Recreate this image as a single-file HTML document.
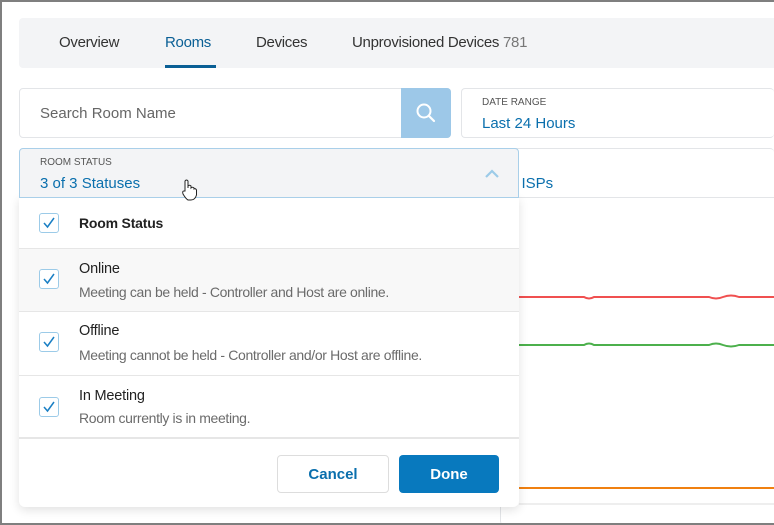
<!DOCTYPE html>
<html><head><style>
*{box-sizing:border-box;margin:0;padding:0}
html,body{width:774px;height:525px;overflow:hidden}
body{background:#fff;font-family:"Liberation Sans",sans-serif;position:relative}
.frame{position:absolute;left:0;top:0;width:774px;height:525px;border:2px solid #7f7f7f;border-right:none}
.abs{position:absolute}
.tabs{left:19px;top:18px;width:760px;height:50px;background:#f3f4f6;border-radius:4px}
.tab{position:absolute;top:16px;font-size:15px;color:#333;letter-spacing:-0.3px}
.box{background:#fff;border:1px solid #e3e5e8;border-radius:4px}
.lbl{font-size:10px;color:#555;letter-spacing:0}
.blue{color:#0a6fad}
.row{position:absolute;left:19px;width:500px;border-bottom:1px solid #e6e6e6}
.cb{position:absolute;left:20px;width:20px;height:20px;border:1px solid #9ccbe8;border-radius:3px;background:#fff}
.t1{position:absolute;left:60px;font-size:14.5px;color:#222;letter-spacing:-0.2px}
.t2{position:absolute;left:60px;font-size:14px;color:#6b6b6b;letter-spacing:-0.35px}
</style></head><body>
<div class="abs tabs">
<div class="tab" style="left:40px">Overview</div>
<div class="tab blue" style="left:146px;color:#0a5f95">Rooms</div>
<div class="abs" style="left:146px;top:47px;width:51px;height:3px;background:#0a5f95"></div>
<div class="tab" style="left:237px">Devices</div>
<div class="tab" style="left:333px">Unprovisioned Devices <span style="color:#777">781</span></div>
</div>
<div class="abs box" style="left:19px;top:88px;width:432px;height:50px"></div>
<div class="abs" style="left:40px;top:105px;font-size:15px;color:#666">Search Room Name</div>
<div class="abs" style="left:401px;top:88px;width:50px;height:50px;background:#9dc8e8;border-radius:0 4px 4px 0">
<svg width="50" height="50"><circle cx="23" cy="23" r="6.5" fill="none" stroke="#fff" stroke-width="2"/><line x1="28" y1="28" x2="33" y2="33" stroke="#fff" stroke-width="2.2" stroke-linecap="round"/></svg></div>
<div class="abs box" style="left:461px;top:88px;width:313px;height:50px;border-right:none"></div>
<div class="abs lbl" style="left:482px;top:97px">DATE RANGE</div>
<div class="abs blue" style="left:482px;top:115px;font-size:15px">Last 24 Hours</div>
<div class="abs box" style="left:500px;top:148px;width:274px;height:377px;border-right:none;border-bottom:none"></div>
<div class="abs" style="left:519px;top:197px;width:255px;height:1px;background:#e3e5e8"></div>
<div class="abs blue" style="left:509px;top:175px;font-size:15px">3 ISPs</div>
<svg class="abs" style="left:519px;top:280px" width="255" height="230">
<path d="M0 17 H65 Q70 20 75 17 H190 Q197 20 204 17 Q212 14 220 17 H260" stroke="#f05050" stroke-width="2" fill="none"/>
<path d="M0 65 H65 Q70 62 75 65 H190 Q197 62 204 65 Q212 68 220 65 H260" stroke="#4cb04c" stroke-width="2" fill="none"/>
<line x1="0" y1="208" x2="260" y2="208" stroke="#f08010" stroke-width="2"/>
<line x1="0" y1="224" x2="260" y2="224" stroke="#ddd" stroke-width="1"/>
</svg>
<div class="abs" style="left:19px;top:197px;width:500px;height:310px;background:#fff;border-radius:0 0 6px 6px;box-shadow:0 3px 10px rgba(0,0,0,.12)"></div>
<div class="abs" style="left:19px;top:148px;width:500px;height:50px;background:#f3f4f6;border:1px solid #a9cfe9;border-radius:4px 4px 0 0"></div>
<div class="abs lbl" style="left:40px;top:157px">ROOM STATUS</div>
<div class="abs blue" style="left:40px;top:175px;font-size:15px">3 of 3 Statuses</div>
<svg class="abs" style="left:484px;top:168px" width="16" height="12"><path d="M2 9 L8 3 L14 9" stroke="#9ccbe8" stroke-width="2.2" fill="none"/></svg>
<svg class="abs" style="left:180px;top:178px" width="18" height="24"><path d="M5 13 V3 Q6.5 1 8 3 V10 V8 Q9.5 6.5 11 8 V10 Q12.5 8.5 14 10 V11 Q15.5 10 16.5 12 V17 Q15 22 11 22 H8 Q6 21 3 16 Q2 13 4 13 Z" fill="#fff" stroke="#222" stroke-width="1"/></svg>
<div class="row" style="top:197px;height:52px">
<div class="cb" style="top:16px"><svg width="18" height="18"><path d="M4 9 L7.5 13 L14 4" stroke="#1a7fc4" stroke-width="1.5" fill="none"/></svg></div>
<div class="t1" style="top:18px;font-weight:bold;font-size:14px">Room Status</div></div>
<div class="row" style="top:249px;height:63px;background:#f8f8f8">
<div class="cb" style="top:20px"><svg width="18" height="18"><path d="M4 9 L7.5 13 L14 4" stroke="#1a7fc4" stroke-width="1.5" fill="none"/></svg></div>
<div class="t1" style="top:12px">Online</div>
<div class="t2" style="top:35px">Meeting can be held - Controller and Host are online.</div></div>
<div class="row" style="top:312px;height:64px">
<div class="cb" style="top:20px"><svg width="18" height="18"><path d="M4 9 L7.5 13 L14 4" stroke="#1a7fc4" stroke-width="1.5" fill="none"/></svg></div>
<div class="t1" style="top:11px">Offline</div>
<div class="t2" style="top:35px">Meeting cannot be held - Controller and/or Host are offline.</div></div>
<div class="row" style="top:376px;height:63px;border-bottom:2px solid #e6e6e6">
<div class="cb" style="top:21px"><svg width="18" height="18"><path d="M4 9 L7.5 13 L14 4" stroke="#1a7fc4" stroke-width="1.5" fill="none"/></svg></div>
<div class="t1" style="top:12px">In Meeting</div>
<div class="t2" style="top:34px">Room currently is in meeting.</div></div>
<div class="abs" style="left:277px;top:455px;width:112px;height:38px;border:1px solid #ddd;border-radius:4px;background:#fff;color:#0a6fad;font-weight:bold;font-size:15px;text-align:center;line-height:38px">Cancel</div>
<div class="abs" style="left:399px;top:455px;width:100px;height:38px;border-radius:4px;background:#0879be;color:#fff;font-weight:bold;font-size:15px;text-align:center;line-height:40px">Done</div>
<div class="frame"></div>
</body></html>
